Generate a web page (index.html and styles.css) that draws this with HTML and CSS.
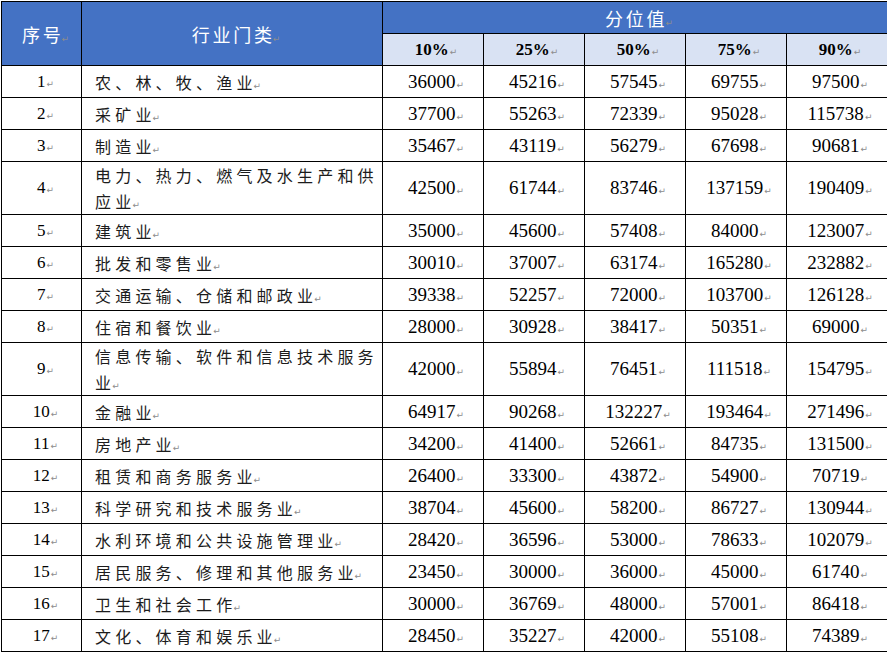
FILE: index.html
```html
<!DOCTYPE html>
<html lang="zh-CN">
<head>
<meta charset="utf-8">
<title>行业分位值</title>
<link rel="stylesheet" href="styles.css">
</head>
<body>
<div class="page">
<table class="wage">
  <colgroup>
    <col class="c-no">
    <col class="c-ind">
    <col class="c-val">
    <col class="c-val">
    <col class="c-val">
    <col class="c-val">
    <col class="c-val">
  </colgroup>
  <thead>
    <tr class="hr1">
      <th class="h-main h-no" rowspan="2">序号<span class="pm">↵</span></th>
      <th class="h-main h-ind" rowspan="2">行业门类<span class="pm">↵</span></th>
      <th class="h-main h-grp" colspan="5">分位值<span class="pm">↵</span></th>
    </tr>
    <tr class="hr2">
      <th class="h-pct">10%<span class="pm">↵</span></th>
      <th class="h-pct">25%<span class="pm">↵</span></th>
      <th class="h-pct">50%<span class="pm">↵</span></th>
      <th class="h-pct">75%<span class="pm">↵</span></th>
      <th class="h-pct">90%<span class="pm">↵</span></th>
    </tr>
  </thead>
  <tbody>
    <tr><td class="no">1<span class="pm">↵</span></td><td class="ind">农、林、牧、渔业<span class="pm">↵</span></td><td class="v">36000<span class="pm">↵</span></td><td class="v">45216<span class="pm">↵</span></td><td class="v">57545<span class="pm">↵</span></td><td class="v">69755<span class="pm">↵</span></td><td class="v">97500<span class="pm">↵</span></td></tr>
    <tr><td class="no">2<span class="pm">↵</span></td><td class="ind">采矿业<span class="pm">↵</span></td><td class="v">37700<span class="pm">↵</span></td><td class="v">55263<span class="pm">↵</span></td><td class="v">72339<span class="pm">↵</span></td><td class="v">95028<span class="pm">↵</span></td><td class="v">115738<span class="pm">↵</span></td></tr>
    <tr><td class="no">3<span class="pm">↵</span></td><td class="ind">制造业<span class="pm">↵</span></td><td class="v">35467<span class="pm">↵</span></td><td class="v">43119<span class="pm">↵</span></td><td class="v">56279<span class="pm">↵</span></td><td class="v">67698<span class="pm">↵</span></td><td class="v">90681<span class="pm">↵</span></td></tr>
    <tr class="tall"><td class="no">4<span class="pm">↵</span></td><td class="ind">电力、热力、燃气及水生产和供应业<span class="pm">↵</span></td><td class="v">42500<span class="pm">↵</span></td><td class="v">61744<span class="pm">↵</span></td><td class="v">83746<span class="pm">↵</span></td><td class="v">137159<span class="pm">↵</span></td><td class="v">190409<span class="pm">↵</span></td></tr>
    <tr><td class="no">5<span class="pm">↵</span></td><td class="ind">建筑业<span class="pm">↵</span></td><td class="v">35000<span class="pm">↵</span></td><td class="v">45600<span class="pm">↵</span></td><td class="v">57408<span class="pm">↵</span></td><td class="v">84000<span class="pm">↵</span></td><td class="v">123007<span class="pm">↵</span></td></tr>
    <tr><td class="no">6<span class="pm">↵</span></td><td class="ind">批发和零售业<span class="pm">↵</span></td><td class="v">30010<span class="pm">↵</span></td><td class="v">37007<span class="pm">↵</span></td><td class="v">63174<span class="pm">↵</span></td><td class="v">165280<span class="pm">↵</span></td><td class="v">232882<span class="pm">↵</span></td></tr>
    <tr><td class="no">7<span class="pm">↵</span></td><td class="ind">交通运输、仓储和邮政业<span class="pm">↵</span></td><td class="v">39338<span class="pm">↵</span></td><td class="v">52257<span class="pm">↵</span></td><td class="v">72000<span class="pm">↵</span></td><td class="v">103700<span class="pm">↵</span></td><td class="v">126128<span class="pm">↵</span></td></tr>
    <tr><td class="no">8<span class="pm">↵</span></td><td class="ind">住宿和餐饮业<span class="pm">↵</span></td><td class="v">28000<span class="pm">↵</span></td><td class="v">30928<span class="pm">↵</span></td><td class="v">38417<span class="pm">↵</span></td><td class="v">50351<span class="pm">↵</span></td><td class="v">69000<span class="pm">↵</span></td></tr>
    <tr class="tall"><td class="no">9<span class="pm">↵</span></td><td class="ind">信息传输、软件和信息技术服务业<span class="pm">↵</span></td><td class="v">42000<span class="pm">↵</span></td><td class="v">55894<span class="pm">↵</span></td><td class="v">76451<span class="pm">↵</span></td><td class="v">111518<span class="pm">↵</span></td><td class="v">154795<span class="pm">↵</span></td></tr>
    <tr><td class="no">10<span class="pm">↵</span></td><td class="ind">金融业<span class="pm">↵</span></td><td class="v">64917<span class="pm">↵</span></td><td class="v">90268<span class="pm">↵</span></td><td class="v">132227<span class="pm">↵</span></td><td class="v">193464<span class="pm">↵</span></td><td class="v">271496<span class="pm">↵</span></td></tr>
    <tr><td class="no">11<span class="pm">↵</span></td><td class="ind">房地产业<span class="pm">↵</span></td><td class="v">34200<span class="pm">↵</span></td><td class="v">41400<span class="pm">↵</span></td><td class="v">52661<span class="pm">↵</span></td><td class="v">84735<span class="pm">↵</span></td><td class="v">131500<span class="pm">↵</span></td></tr>
    <tr><td class="no">12<span class="pm">↵</span></td><td class="ind">租赁和商务服务业<span class="pm">↵</span></td><td class="v">26400<span class="pm">↵</span></td><td class="v">33300<span class="pm">↵</span></td><td class="v">43872<span class="pm">↵</span></td><td class="v">54900<span class="pm">↵</span></td><td class="v">70719<span class="pm">↵</span></td></tr>
    <tr><td class="no">13<span class="pm">↵</span></td><td class="ind">科学研究和技术服务业<span class="pm">↵</span></td><td class="v">38704<span class="pm">↵</span></td><td class="v">45600<span class="pm">↵</span></td><td class="v">58200<span class="pm">↵</span></td><td class="v">86727<span class="pm">↵</span></td><td class="v">130944<span class="pm">↵</span></td></tr>
    <tr><td class="no">14<span class="pm">↵</span></td><td class="ind">水利环境和公共设施管理业<span class="pm">↵</span></td><td class="v">28420<span class="pm">↵</span></td><td class="v">36596<span class="pm">↵</span></td><td class="v">53000<span class="pm">↵</span></td><td class="v">78633<span class="pm">↵</span></td><td class="v">102079<span class="pm">↵</span></td></tr>
    <tr><td class="no">15<span class="pm">↵</span></td><td class="ind">居民服务、修理和其他服务业<span class="pm">↵</span></td><td class="v">23450<span class="pm">↵</span></td><td class="v">30000<span class="pm">↵</span></td><td class="v">36000<span class="pm">↵</span></td><td class="v">45000<span class="pm">↵</span></td><td class="v">61740<span class="pm">↵</span></td></tr>
    <tr><td class="no">16<span class="pm">↵</span></td><td class="ind">卫生和社会工作<span class="pm">↵</span></td><td class="v">30000<span class="pm">↵</span></td><td class="v">36769<span class="pm">↵</span></td><td class="v">48000<span class="pm">↵</span></td><td class="v">57001<span class="pm">↵</span></td><td class="v">86418<span class="pm">↵</span></td></tr>
    <tr><td class="no">17<span class="pm">↵</span></td><td class="ind">文化、体育和娱乐业<span class="pm">↵</span></td><td class="v">28450<span class="pm">↵</span></td><td class="v">35227<span class="pm">↵</span></td><td class="v">42000<span class="pm">↵</span></td><td class="v">55108<span class="pm">↵</span></td><td class="v">74389<span class="pm">↵</span></td></tr>
  </tbody>
</table>
</div>
</body>
</html>
```

FILE: styles.css
```css
html, body {
  margin: 0;
  padding: 0;
  background: #ffffff;
}

.page {
  padding: 1px 0 0 1px;
}

.wage {
  border-collapse: collapse;
  table-layout: fixed;
  width: 886px;
  font-family: "Liberation Serif", "Noto Sans CJK SC", serif;
  color: #000;
}

.c-no { width: 80px; }
.c-ind { width: 301px; }
.c-val { width: 101px; }

.wage th,
.wage td {
  border: 1px solid #000;
  padding: 0;
  vertical-align: middle;
  line-height: 22px;
}

.wage .hr1,
.wage .hr2,
.wage tbody tr {
  height: 32px;
}

.wage tbody tr.tall {
  height: 53px;
}

.wage .h-main {
  background: #4472c4;
  color: #ffffff;
  font-family: "Noto Sans CJK SC", sans-serif;
  font-weight: 400;
  font-size: 18px;
  letter-spacing: 2.8px;
  text-align: center;
  padding-left: 8px;
}

.wage .h-pct {
  background: #d9e2f3;
  font-family: "Liberation Serif", serif;
  font-weight: 700;
  font-size: 17px;
  text-align: center;
  padding-left: 6px;
}

.wage .no {
  font-size: 17px;
  text-align: center;
  padding-left: 8px;
}

.wage .ind {
  font-family: "Noto Sans CJK SC", sans-serif;
  font-size: 16px;
  line-height: 26px;
  letter-spacing: 4.2px;
  color: #1c1c1c;
  padding: 0 2px 0 13px;
  text-align: left;
}

.wage .v {
  font-size: 19px;
  text-align: center;
  padding-left: 6px;
}

.pm {
  font-family: "DejaVu Sans", sans-serif;
  font-size: 9px;
  line-height: 1;
  font-weight: 400;
  letter-spacing: 0;
  color: #8c8c8c;
  margin-left: 1px;
}

.ind .pm {
  margin-left: -3px;
}

.h-main .pm {
  margin-left: -2px;
}
```
